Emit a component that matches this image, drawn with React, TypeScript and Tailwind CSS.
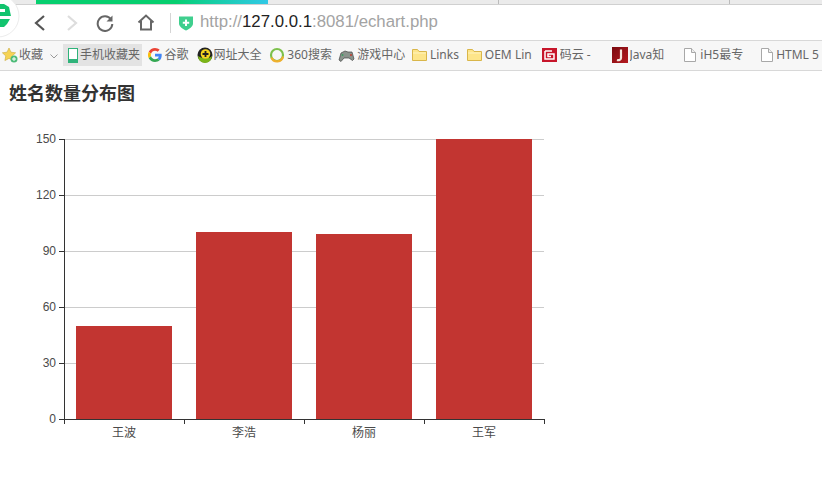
import React from "react";

const font = "font-['Noto_Sans','Noto_Sans_CJK_SC',sans-serif]";

function Folder() {
  return (
    <svg width="15" height="14" viewBox="0 0 15 14" className="shrink-0">
      <path d="M.5 12.5V1.5h5l1.5 2h7.5v9z" fill="#fde58a" stroke="#d9b64a" />
      <rect x="1" y="4.5" width="13" height="1" fill="#fff3bd" />
    </svg>
  );
}

function Doc() {
  return (
    <svg width="12" height="14" viewBox="0 0 12 14" className="shrink-0">
      <path d="M.5.5h7l4 4v9H.5z" fill="#fff" stroke="#a8a8a8" />
      <path d="M7.5.5v4h4" fill="#eee" stroke="#a8a8a8" />
    </svg>
  );
}

function Tail({ children, className }: { children: React.ReactNode; className: string }) {
  return <span className={`whitespace-nowrap overflow-hidden ${className}`}>{children}</span>;
}

function Bookmarks() {
  return (
    <div className={`flex items-center h-[31px] bg-[#f7f7f7] border-y border-[#d8d8d8] text-xs text-[#666] pl-[2px] pb-[1px] ${font}`}>
      <svg width="16" height="16" viewBox="0 0 16 16" className="shrink-0">
        <path d="M7 1l2 4.2 4.6.6-3.4 3.2.9 4.6L7 11.4 2.9 13.6l.9-4.6L.4 5.800 5 5.200z" fill="#f6d354" stroke="#c9a93a" strokeWidth=".6" />
        <circle cx="12" cy="12" r="3.500" fill="#4dbb78" />
        <path d="M12 10v4M10 12h4" stroke="#fff" />
      </svg>
      <Tail className="ml-[1px] w-[24px]">收藏</Tail>
      <svg width="8" height="5" viewBox="0 0 8 5" className="ml-[7px] mt-[2px] shrink-0">
        <path d="M.5.500L4 4l3.500-3.500" fill="none" stroke="#999" />
      </svg>
      <div className="flex items-center ml-[5px] w-[79px] h-[22px] bg-[#e3e3e3] pl-[5px]">
        <svg width="10" height="15" viewBox="0 0 10 15" className="shrink-0">
          <rect x=".5" y=".5" width="9" height="14" fill="#fff" stroke="#2fb37a" />
          <rect x="0" y="11" width="10" height="4" fill="#2fb37a" />
        </svg>
        <Tail className="ml-[2px]">手机收藏夹</Tail>
      </div>
      <svg width="14" height="14" viewBox="0 0 48 48" className="ml-[6px] shrink-0">
        <path fill="#EA4335" d="M24 9.500c3.500 0 6.700 1.300 9.100 3.500l6.800-6.800C35.800 2.400 30.300 0 24 0 14.600 0 6.500 5.400 2.600 13.200l7.900 6.200C12.400 13.700 17.700 9.500 24 9.500z" />
        <path fill="#4285F4" d="M47 24.500c0-1.600-.1-3.100-.4-4.500H24v9h12.900c-.6 3-2.200 5.500-4.700 7.200l7.700 6C44.400 38 47 31.800 47 24.500z" />
        <path fill="#FBBC05" d="M10.500 28.600c-.5-1.500-.8-3-.8-4.600s.3-3.200.8-4.600l-7.900-6.200C.9 16.500 0 20.100 0 24s.9 7.500 2.600 10.800z" />
        <path fill="#34A853" d="M24 48c6.500 0 11.900-2.100 15.900-5.800l-7.700-6c-2.100 1.400-4.900 2.300-8.200 2.300-6.300 0-11.600-4.200-13.500-9.900l-7.900 6.200C6.500 42.600 14.600 48 24 48z" />
      </svg>
      <Tail className="ml-[3px] w-[25px]">谷歌</Tail>
      <svg width="16" height="16" viewBox="0 0 16 16" className="ml-[7px] shrink-0">
        <circle cx="8" cy="8" r="7.500" fill="#222" />
        <path d="M1 9a7 7 0 0 0 14 0c-3 3-9 3-14 0z" fill="#7cb518" />
        <circle cx="8.500" cy="7" r="4.800" fill="#f6d71f" />
        <path d="M8.500 4v6M5.500 7h6" stroke="#222" strokeWidth="1.800" />
      </svg>
      <Tail className="ml-[1px] w-[49px]">网址大全</Tail>
      <svg width="16" height="16" viewBox="0 0 16 16" className="ml-[7px] shrink-0">
        <circle cx="8" cy="8" r="6" fill="none" stroke="#7cc04b" strokeWidth="2.200" />
        <path d="M2.500 10.500A6 6 0 0 0 14 9.500" fill="none" stroke="#efb02e" strokeWidth="2.200" />
      </svg>
      <Tail className="ml-[2px] w-[46px]">360搜索</Tail>
      <svg width="17" height="13" viewBox="0 0 17 13" className="ml-[5px] shrink-0">
        <path d="M1 11l2-7 4-2 3 1 4 0 2 7-1.500 1.500L11 9H6l-3 3.500z" fill="#8a938c" stroke="#444" strokeWidth=".7" />
        <circle cx="13" cy="6" r="1" fill="#c0392b" />
        <circle cx="4.500" cy="6" r="1" fill="#3c9a5f" />
      </svg>
      <Tail className="ml-[2px] w-[49px]">游戏中心</Tail>
      <div className="ml-[6px] flex"><Folder /></div>
      <Tail className="ml-[3px] w-[30px]">Links</Tail>
      <div className="ml-[7px] flex"><Folder /></div>
      <Tail className="ml-[3px] w-[49px]">OEM Lin</Tail>
      <svg width="15" height="14" viewBox="0 0 15 14" className="ml-[8px] shrink-0">
        <rect width="15" height="14" fill="#c7162b" />
        <path d="M3 3h7M3 3v8h9V6H6v2.500h3" fill="none" stroke="#fff" strokeWidth="1.500" />
      </svg>
      <Tail className="ml-[3px] w-[34px]">码云 -</Tail>
      <svg width="16" height="16" viewBox="0 0 16 16" className="ml-[18px] shrink-0">
        <defs>
          <linearGradient id="jv" x1="0" x2="1" y1="0" y2="1">
            <stop offset="0" stopColor="#7a0a10" />
            <stop offset="1" stopColor="#b51a20" />
          </linearGradient>
        </defs>
        <rect width="16" height="16" fill="url(#jv)" />
        <path d="M9 2.500v8.500c0 2-2.500 2.500-4 2" fill="none" stroke="#f5e8e0" strokeWidth="2.200" />
      </svg>
      <Tail className="ml-[2px] w-[38px]">Java知</Tail>
      <div className="ml-[17px] flex"><Doc /></div>
      <Tail className="ml-[4px] w-[44px]">iH5最专</Tail>
      <div className="ml-[17px] flex"><Doc /></div>
      <Tail className="ml-[3px] w-[46px]">HTML 5</Tail>
    </div>
  );
}

function Toolbar() {
  return (
    <div className="flex items-center h-[35px] bg-white pl-[33px]">
      <svg width="14" height="18" viewBox="0 0 14 18" className="shrink-0">
        <path d="M11 2L3 9l8 7" fill="none" stroke="#555" strokeWidth="2.200" />
      </svg>
      <svg width="14" height="18" viewBox="0 0 14 18" className="ml-[18px] shrink-0">
        <path d="M3 2l8 7-8 7" fill="none" stroke="#ddd" strokeWidth="2.200" />
      </svg>
      <svg width="18" height="18" viewBox="0 0 18 18" className="ml-[17px] shrink-0">
        <path d="M15 5.500A7.300 7.300 0 1 0 16.300 10" fill="none" stroke="#666" strokeWidth="2" />
        <path d="M16.500 1.500v6h-6z" fill="#666" />
      </svg>
      <svg width="18" height="17" viewBox="0 0 18 17" className="ml-[23px] shrink-0">
        <path d="M1.500 8.500L9 1.500l7.500 7M4 7v8.500h10V7" fill="none" stroke="#666" strokeWidth="2" />
      </svg>
      <div className="ml-[15px] h-[20px] w-px bg-[#d5d5d5]" />
      <svg width="14" height="16" viewBox="0 0 14 16" className="ml-[8px] shrink-0">
        <path d="M0 1.500h14v7c0 3.500-4 5.500-7 7-3-1.500-7-3.500-7-7z" fill="#3fcf8e" />
        <path d="M7 4.500v6.500M3.800 7.800h6.400" stroke="#fff" strokeWidth="2" />
      </svg>
      <div className="ml-[7px] text-[16.8px] leading-none whitespace-nowrap font-['Liberation_Sans',sans-serif] text-[#a3a3a3]">
        http://<span className="text-[#222]">127.0.0.1</span>:8081/echart.php
      </div>
    </div>
  );
}

function TabStrip() {
  return (
    <div className="flex h-[5px] bg-[#ebebeb] border-b border-[#d0d0d0]">
      <div className="ml-[36px] w-[232px] h-[4px] bg-gradient-to-r from-[#07cf6f] from-60% to-[#31c8e6]" />
      <div className="ml-[230px] h-[4px] w-px bg-[#bbb]" />
      <div className="ml-[230px] h-[4px] w-px bg-[#bbb]" />
    </div>
  );
}

const ticks = [
  { y: 139, label: "150" },
  { y: 195, label: "120" },
  { y: 251, label: "90" },
  { y: 307, label: "60" },
  { y: 363, label: "30" },
];
const bars = [
  { x: 76, y: 326, name: "王波", tx: 124 },
  { x: 196, y: 232, name: "李浩", tx: 244 },
  { x: 316, y: 234, name: "杨丽", tx: 364 },
  { x: 436, y: 139, name: "王军", tx: 484 },
];

function Chart() {
  return (
    <svg width="560" height="320" viewBox="0 125 560 320" className="block" fontFamily="'Liberation Sans','Noto Sans CJK SC',sans-serif" fontSize="12" fill="#4a4a4a">
      {ticks.map((t) => (
        <line key={t.y} x1="64" x2="544" y1={t.y + 0.5} y2={t.y + 0.5} stroke="#ccc" />
      ))}
      {bars.map((b) => (
        <rect key={b.x} x={b.x} y={b.y} width="96" height={419 - b.y} fill="#c23531" />
      ))}
      <line x1="64.500" x2="64.500" y1="139" y2="424" stroke="#333" />
      <line x1="59" x2="544.500" y1="419.500" y2="419.500" stroke="#333" />
      {[184, 304, 424, 544].map((x) => (
        <line key={x} x1={x + 0.5} x2={x + 0.5} y1="419" y2="424" stroke="#333" />
      ))}
      {ticks.map((t) => (
        <g key={t.label}>
          <line x1="59" x2="64" y1={t.y + 0.5} y2={t.y + 0.5} stroke="#333" />
          <text x="56" y={t.y + 4} textAnchor="end">{t.label}</text>
        </g>
      ))}
      <text x="56" y="423" textAnchor="end">0</text>
      {bars.map((b) => (
        <text key={b.name} x={b.tx} y="437" textAnchor="middle">{b.name}</text>
      ))}
    </svg>
  );
}

export default function App() {
  return (
    <div className="relative w-[822px] h-[486px] overflow-hidden bg-white">
      <TabStrip />
      <Toolbar />
      <Bookmarks />
      <div className="pl-[9px] pt-[11px] text-[18px] leading-[24px] font-bold text-[#333] font-['Liberation_Sans','Noto_Sans_CJK_SC',sans-serif]">
        姓名数量分布图
      </div>
      <div className="mt-[19px]">
        <Chart />
      </div>
      <svg width="20" height="38" viewBox="0 0 20 38" className="absolute left-0 top-0">
        <circle cx="-2" cy="16" r="21" fill="#fff" stroke="#ececec" />
        <path d="M0 4h4L9 7l2 9H0z" fill="#12c46e" />
        <path d="M0 9h5v3H0z" fill="#fff" />
        <path d="M0 19h10l-3 5-3 3H0z" fill="#12c46e" />
      </svg>
    </div>
  );
}
